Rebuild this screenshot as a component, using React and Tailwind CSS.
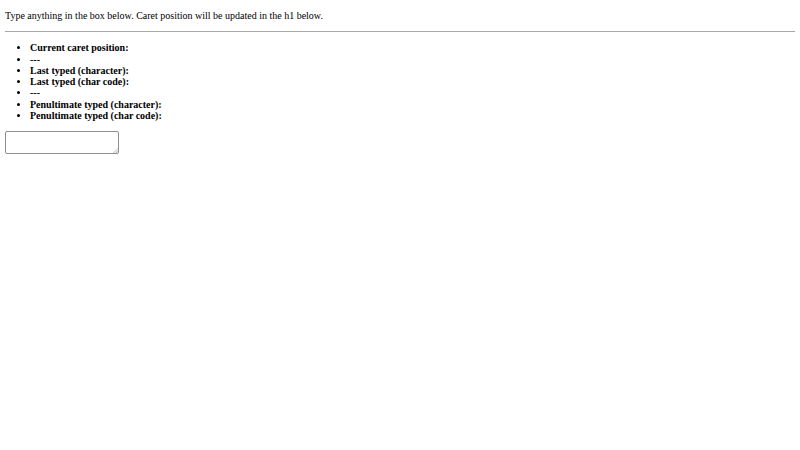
import { useState } from 'react'

const items = [
  'Current caret position:',
  '---',
  'Last typed (character):',
  'Last typed (char code):',
  '---',
  'Penultimate typed (character):',
  'Penultimate typed (char code):',
]

export default function App() {
  const [text, setText] = useState('')

  return (
    <div
      className="min-h-screen bg-white px-[5px] pt-[10px] text-[10px] leading-[11.25px] text-black"
      style={{ fontFamily: '"Liberation Serif", "Times New Roman", serif' }}
    >
      <p>Type anything in the box below. Caret position will be updated in the h1 below.</p>

      <hr className="mt-[10px] mb-0 h-0 border-0 border-t-[1px] border-[#a8a8a8]" />

      <ul className="mt-[10px] list-disc pl-[25px] font-bold">
        {items.map((label, i) => (
          <li key={i}>{label}</li>
        ))}
      </ul>

      {/* textarea with a small resize grip drawn over its corner */}
      <div className="relative mt-[10px] inline-block">
        <textarea
          value={text}
          onChange={(e) => setText(e.target.value)}
          className="block h-[23px] w-[114px] resize-none rounded-[2px] border border-[#8f8f8f] bg-white outline-none"
        />
        <svg
          className="pointer-events-none absolute right-[1px] bottom-[1px]"
          width="5"
          height="5"
          viewBox="0 0 5 5"
        >
          <path d="M5 0.5 L0.5 5 M5 2.8 L2.8 5" stroke="#9a9a9a" strokeWidth="0.7" />
        </svg>
      </div>
    </div>
  )
}
